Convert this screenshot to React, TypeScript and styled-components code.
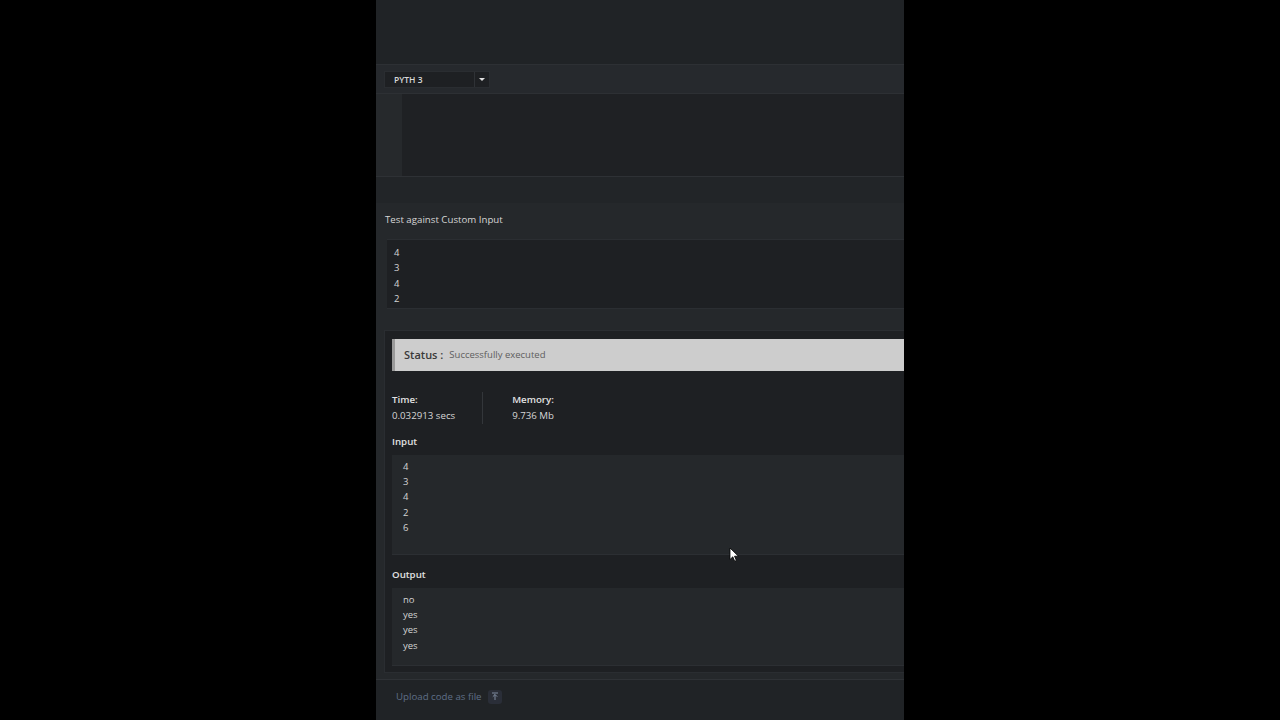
import React from "react";
import styled, { createGlobalStyle } from "styled-components";

const GlobalStyle = createGlobalStyle`
  html, body {
    margin: 0;
    padding: 0;
    background: #000;
    font-family: "Open Sans", "Liberation Sans", sans-serif;
  }
`;

const Page = styled.div`
  position: relative;
  width: 528px;
  height: 720px;
  margin: 0 auto;
  background: #202326;
  overflow: hidden;
  display: flex;
  flex-direction: column;
`;

const TopSpace = styled.div`
  height: 64px;
  flex: none;
`;

const Toolbar = styled.div`
  height: 28px;
  flex: none;
  display: flex;
  align-items: center;
  padding: 0 8px;
  background: #26292d;
  border-top: 1px solid #2d3034;
  border-bottom: 1px solid #2d3034;
`;

const Select = styled.div`
  width: 106px;
  height: 17px;
  display: flex;
  align-items: stretch;
  background: #1e2023;
  border: 1px solid #2a2d31;
  box-sizing: border-box;
`;

const SelectLabel = styled.span`
  flex: 1;
  display: flex;
  align-items: center;
  padding-left: 9px;
  font-size: 8.5px;
  font-weight: 600;
  color: #d8d8d8;
`;

const SelectCaret = styled.span`
  width: 14px;
  display: flex;
  align-items: center;
  justify-content: center;
  border-left: 1px solid #2f3236;

  &::after {
    content: "";
    border-left: 3px solid transparent;
    border-right: 3px solid transparent;
    border-top: 3px solid #e0e0e0;
  }
`;

const Editor = styled.div`
  height: 82px;
  flex: none;
  display: flex;
  border-bottom: 1px solid #2e3135;
`;

const Gutter = styled.div`
  width: 26px;
  background: #26292c;
`;

const CodeArea = styled.div`
  flex: 1;
  background: #1f2124;
`;

const Gap = styled.div<{ h: number; bg: string }>`
  height: ${(p) => p.h}px;
  flex: none;
  background: ${(p) => p.bg};
`;

const CustomSection = styled.div`
  flex: none;
  background: #25282b;
  padding: 10px 0 21px 9px;
`;

const SectionLabel = styled.div`
  font-size: 9.7px;
  line-height: 14px;
  color: #d6d6d6;
  margin-bottom: 12px;
`;

const CustomBox = styled.div`
  margin-left: 2px;
  background: #1e2023;
  border-top: 1px solid #2b2e32;
  border-bottom: 1px solid #2b2e32;
  padding: 5px 0 1px 7px;
`;

const Line = styled.div`
  font-size: 9.5px;
  line-height: 15.4px;
  color: #d4d4d4;
`;

const ResultWrap = styled.div`
  flex: none;
  background: #25282b;
  padding: 0 0 6px 8px;
`;

const ResultPanel = styled.div`
  background: #1e2023;
  border: 1px solid #2a2d31;
  border-right: none;
  padding: 8px 0 6px 7px;
`;

const StatusBar = styled.div`
  height: 32px;
  display: flex;
  align-items: center;
  gap: 6px;
  padding-left: 9px;
  background: #cdcdcd;
  border-left: 3px solid #9a9a9a;
`;

const StatusKey = styled.span`
  font-size: 11px;
  font-weight: 600;
  color: #3a3a3a;
`;

const StatusValue = styled.span`
  font-size: 9.5px;
  color: #5e5e5e;
`;

const Stats = styled.div`
  display: flex;
  margin-top: 21px;
`;

const Stat = styled.div<{ divider?: boolean }>`
  padding-right: 27px;
  margin-right: 29px;
  border-right: ${(p) => (p.divider ? "1px solid #33363a" : "none")};
`;

const StatKey = styled.div`
  font-size: 9.7px;
  line-height: 16px;
  font-weight: 600;
  color: #e2e2e2;
`;

const StatValue = styled.div`
  font-size: 9.7px;
  line-height: 16px;
  color: #d6d6d6;
`;

const BlockLabel = styled.div<{ top: number }>`
  margin-top: ${(p) => p.top}px;
  font-size: 9.7px;
  line-height: 14px;
  font-weight: 600;
  color: #e2e2e2;
`;

const OutBox = styled.div<{ h: number }>`
  margin-top: 6px;
  height: ${(p) => p.h}px;
  box-sizing: border-box;
  background: #25282b;
  border-bottom: 1px solid #2c2f33;
  padding: 4px 0 0 11px;
`;

const Footer = styled.div`
  flex: 1;
  background: #202326;
  border-top: 1px solid #2f3236;
  display: flex;
  align-items: flex-start;
  padding: 9px 0 0 20px;
  gap: 6px;
`;

const UploadText = styled.span`
  font-size: 9.7px;
  line-height: 16px;
  color: #5f6f86;
`;

const UploadIcon = styled.span`
  width: 14px;
  height: 14px;
  margin-top: 1px;
  border-radius: 3px;
  background: #2a2e38;
  display: flex;
  align-items: center;
  justify-content: center;
`;

const Cursor = styled.svg`
  position: absolute;
  left: 353px;
  top: 547px;
`;

const customInput = ["4", "3", "4", "2"];
const input = ["4", "3", "4", "2", "6"];
const output = ["no", "yes", "yes", "yes"];

export default function App() {
  return (
    <>
      <GlobalStyle />
      <Page>
        <TopSpace />
        <Toolbar>
          <Select>
            <SelectLabel>PYTH 3</SelectLabel>
            <SelectCaret />
          </Select>
        </Toolbar>
        <Editor>
          <Gutter />
          <CodeArea />
        </Editor>
        <Gap h={26} bg="#222528" />
        <CustomSection>
          <SectionLabel>Test against Custom Input</SectionLabel>
          <CustomBox>
            {customInput.map((l, i) => (
              <Line key={i}>{l}</Line>
            ))}
          </CustomBox>
        </CustomSection>
        <ResultWrap>
          <ResultPanel>
            <StatusBar>
              <StatusKey>Status :</StatusKey>
              <StatusValue>Successfully executed</StatusValue>
            </StatusBar>
            <Stats>
              <Stat divider>
                <StatKey>Time:</StatKey>
                <StatValue>0.032913 secs</StatValue>
              </Stat>
              <Stat>
                <StatKey>Memory:</StatKey>
                <StatValue>9.736 Mb</StatValue>
              </Stat>
            </Stats>
            <BlockLabel top={11}>Input</BlockLabel>
            <OutBox h={100}>
              {input.map((l, i) => (
                <Line key={i}>{l}</Line>
              ))}
            </OutBox>
            <BlockLabel top={13}>Output</BlockLabel>
            <OutBox h={78}>
              {output.map((l, i) => (
                <Line key={i}>{l}</Line>
              ))}
            </OutBox>
          </ResultPanel>
        </ResultWrap>
        <Footer>
          <UploadText>Upload code as file</UploadText>
          <UploadIcon>
            <svg width="8" height="9" viewBox="0 0 8 9">
              <path d="M1 1h6M4 8V2.5M1.8 4.7L4 2.5l2.2 2.2" stroke="#7e8ba0" strokeWidth="1" fill="none" />
            </svg>
          </UploadIcon>
        </Footer>
        <Cursor width="10" height="15" viewBox="0 0 10 15">
          <path d="M1 1v11.5l2.8-2.7 1.9 4.4 1.7-.7-1.9-4.3H9.4z" fill="#fff" stroke="#000" strokeWidth="0.8" />
        </Cursor>
      </Page>
    </>
  );
}
